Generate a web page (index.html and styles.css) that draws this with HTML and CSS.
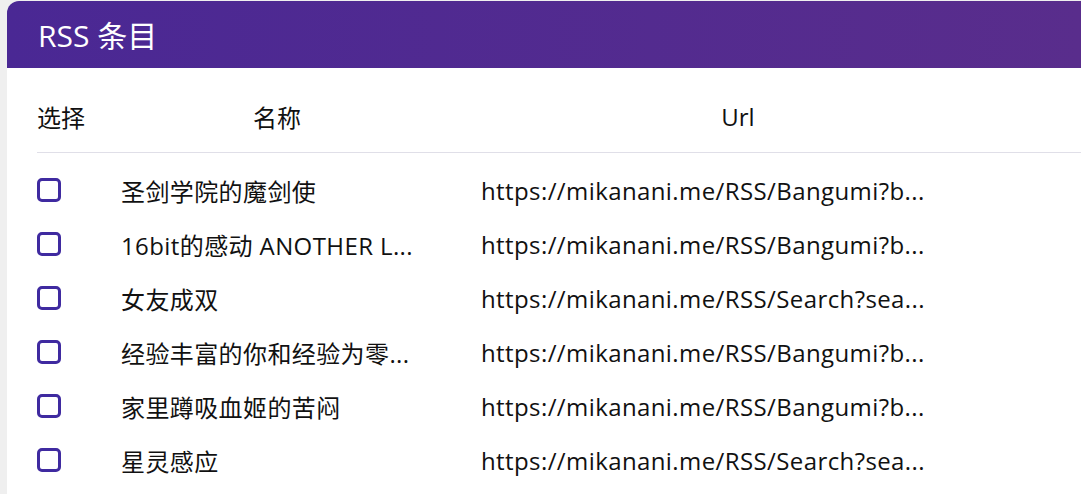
FILE: index.html
```html
<!DOCTYPE html>
<html lang="zh-CN">
<head>
    <meta charset="UTF-8">
    <meta name="viewport" content="width=device-width, initial-scale=1.0">
    <title>RSS 条目</title>
    <link rel="stylesheet" href="styles.css">
</head>
<body>

    <div class="card">
        <div class="card-header">RSS 条目</div>

        <div class="card-body">
            <div class="table-head">
                <div class="col-select">选择</div>
                <div class="col-name">名称</div>
                <div class="col-url">Url</div>
            </div>

            <div class="table-row">
                <div class="cell-select"><span class="checkbox"></span></div>
                <div class="cell-name">圣剑学院的魔剑使</div>
                <div class="cell-url">https://mikanani.me/RSS/Bangumi?b...</div>
            </div>
            <div class="table-row">
                <div class="cell-select"><span class="checkbox"></span></div>
                <div class="cell-name">16bit的感动 ANOTHER L...</div>
                <div class="cell-url">https://mikanani.me/RSS/Bangumi?b...</div>
            </div>
            <div class="table-row">
                <div class="cell-select"><span class="checkbox"></span></div>
                <div class="cell-name">女友成双</div>
                <div class="cell-url">https://mikanani.me/RSS/Search?sea...</div>
            </div>
            <div class="table-row">
                <div class="cell-select"><span class="checkbox"></span></div>
                <div class="cell-name">经验丰富的你和经验为零...</div>
                <div class="cell-url">https://mikanani.me/RSS/Bangumi?b...</div>
            </div>
            <div class="table-row">
                <div class="cell-select"><span class="checkbox"></span></div>
                <div class="cell-name">家里蹲吸血姬的苦闷</div>
                <div class="cell-url">https://mikanani.me/RSS/Bangumi?b...</div>
            </div>
            <div class="table-row">
                <div class="cell-select"><span class="checkbox"></span></div>
                <div class="cell-name">星灵感应</div>
                <div class="cell-url">https://mikanani.me/RSS/Search?sea...</div>
            </div>
        </div>
    </div>

</body>
</html>
```

FILE: styles.css
```css
body {
    font-family: "Open Sans", "Noto Sans CJK SC", sans-serif;
    background: #efefef;
    color: #111;
    margin: 0;
    padding: 1px 0 0 7px;
    overflow: hidden;
}

.card {
    background: white;
    border-radius: 12px 0 0 0;
    min-height: 600px;
}

.card-header {
    height: 67px;
    box-sizing: border-box;
    padding: 0 0 2px 31px;
    display: flex;
    align-items: center;
    background: linear-gradient(90deg, #4a2894, #592d8c);
    border-radius: 12px 0 0 0;
    color: white;
    font-size: 30px;
}

.card-body {
    padding: 0 0 0 30px;
}

.table-head {
    display: grid;
    grid-template-columns: 84px 312px 610px;
    height: 85px;
    box-sizing: border-box;
    padding-top: 12px;
    margin-bottom: 10px;
    align-items: center;
    border-bottom: 1px solid #e0dfe8;
    font-size: 24px;
}

.table-head .col-name,
.table-head .col-url {
    text-align: center;
}

.table-row {
    display: grid;
    grid-template-columns: 84px 360px 1fr;
    height: 54px;
    align-items: center;
    font-size: 24px;
    white-space: nowrap;
}

.cell-name,
.cell-url {
    letter-spacing: 0.4px;
}

.cell-select {
    display: flex;
    align-items: center;
}

.checkbox {
    width: 18px;
    height: 18px;
    border: 3px solid #3f2aa0;
    border-radius: 5px;
}
```
